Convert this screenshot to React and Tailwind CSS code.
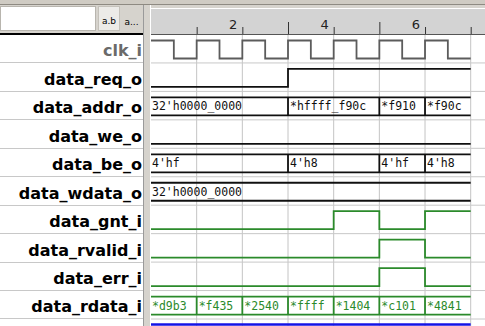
import React from "react";

const P = 45.67;
const H = 28.45;
const X = (k) => k * P;
const END = X(7);

const names = [
  "clk_i",
  "data_req_o",
  "data_addr_o",
  "data_we_o",
  "data_be_o",
  "data_wdata_o",
  "data_gnt_i",
  "data_rvalid_i",
  "data_err_i",
  "data_rdata_i",
];

const BLACK = "#101010";
const GREEN = "#2b8a2b";
const CLK = "#5c5c5c";

function Digital({ row, edges, color, start }) {
  // edges: list of [k, level]
  const top = row * H;
  const hi = top + 5.5;
  const lo = top + 23.5;
  let y = start ? hi : lo;
  let pts = [[0, y]];
  edges.forEach(([xx, lvl]) => {
    const ny = lvl ? hi : lo;
    pts.push([xx, y]);
    pts.push([xx, ny]);
    y = ny;
  });
  pts.push([END, y]);
  return (
    <polyline
      points={pts.map((p) => p.join(",")).join(" ")}
      fill="none"
      stroke={color}
      strokeWidth="1.8"
    />
  );
}

function Bus({ row, segs, color }) {
  const top = row * H;
  const a = top + 5.5;
  const b = top + 23.5;
  return (
    <g>
      <line x1={0} y1={a} x2={END} y2={a} stroke={color} strokeWidth="1.8" />
      <line x1={0} y1={b} x2={END} y2={b} stroke={color} strokeWidth="1.8" />
      {segs.map(([xx, label], i) => (
        <g key={i}>
          {xx > 0 && (
            <line x1={xx} y1={a} x2={xx} y2={b} stroke={color} strokeWidth="1.8" />
          )}
          <text
            x={xx + (xx > 0 ? 2 : 1)}
            y={top + 18.5}
            fill={color}
            fontFamily="'DejaVu Sans Mono', monospace"
            fontSize="11.5"
          >
            {label}
          </text>
        </g>
      ))}
    </g>
  );
}

function Waves() {
  const clkEdges = [];
  for (let k = 0; k < 7; k++) {
    clkEdges.push([X(k) + P / 2, 0]);
    clkEdges.push([X(k + 1), 1]);
  }
  clkEdges.pop();
  return (
    <svg width="334" height="291" className="block">
      {/* grid */}
      {[1, 2, 3, 4, 5, 6, 7].map((k) => (
        <line key={k} x1={X(k)} y1={0} x2={X(k)} y2={291} stroke="#c4c4c4" strokeWidth="1" />
      ))}
      {names.map((_, i) => (
        <line
          key={i}
          x1={0}
          y1={(i + 1) * H - 0.5}
          x2={334}
          y2={(i + 1) * H - 0.5}
          stroke="#c8c8c8"
          strokeWidth="1"
        />
      ))}
      <Digital row={0} edges={clkEdges} color={CLK} start={true} />
      <Digital row={1} edges={[[X(3), 1]]} color={BLACK} start={false} />
      <Bus
        row={2}
        color={BLACK}
        segs={[
          [0, "32'h0000_0000"],
          [X(3), "*hffff_f90c"],
          [X(5), "*f910"],
          [X(6), "*f90c"],
        ]}
      />
      <Digital row={3} edges={[]} color={BLACK} start={false} />
      <Bus
        row={4}
        color={BLACK}
        segs={[
          [0, "4'hf"],
          [X(3), "4'h8"],
          [X(5), "4'hf"],
          [X(6), "4'h8"],
        ]}
      />
      <Bus row={5} color={BLACK} segs={[[0, "32'h0000_0000"]]} />
      <Digital
        row={6}
        edges={[
          [X(4), 1],
          [X(5), 0],
          [X(6), 1],
        ]}
        color={GREEN}
        start={false}
      />
      <Digital
        row={7}
        edges={[
          [X(5), 1],
          [X(6), 0],
        ]}
        color={GREEN}
        start={false}
      />
      <Digital
        row={8}
        edges={[
          [X(5), 1],
          [X(6), 0],
        ]}
        color={GREEN}
        start={false}
      />
      <Bus
        row={9}
        color={GREEN}
        segs={[
          [0, "*d9b3"],
          [X(1), "*f435"],
          [X(2), "*2540"],
          [X(3), "*ffff"],
          [X(4), "*1404"],
          [X(5), "*c101"],
          [X(6), "*4841"],
        ]}
      />
      <line x1={0} y1={289.5} x2={END} y2={289.5} stroke="#1414e6" strokeWidth="2.5" />
    </svg>
  );
}

function Ruler() {
  const ticks = [1, 2, 3, 4, 5, 6, 7];
  return (
    <svg width="334" height="26" className="block">
      {ticks.map((k) => (
        <line
          key={k}
          x1={X(k) + 0.5}
          x2={X(k) + 0.5}
          y1={k === 3 || k === 5 ? 13 : 18}
          y2={26}
          stroke="#333"
          strokeWidth="1"
        />
      ))}
      {[
        [2, "2"],
        [4, "4"],
        [6, "6"],
      ].map(([k, t]) => (
        <text
          key={k}
          x={X(k) - 5}
          y={20}
          textAnchor="end"
          fontFamily="'DejaVu Sans', sans-serif"
          fontSize="13"
          fill="#222"
        >
          {t}
        </text>
      ))}
    </svg>
  );
}

export default function App() {
  return (
    <div className="w-[485px] h-[326px] overflow-hidden bg-[#d6d3cd] flex flex-col">
      <div className="h-[5px] shrink-0 bg-[#cfcbc3] border-b border-[#8e8a82]" />
      <div className="flex flex-1 min-h-0">
        {/* left panel */}
        <div className="w-[144px] shrink-0 flex flex-col border-r border-[#9a9a9a]">
          <div className="h-[28px] shrink-0 flex items-stretch pt-[1px] pb-[2px]">
            <div className="w-[96px] bg-white border border-[#b8b5ae]" />
            <div className="ml-[2px] w-[22px] bg-[#ecebe8] border border-[#c4c1ba] flex items-end justify-center pb-[4px] text-[9px] leading-none text-black font-['DejaVu_Sans',sans-serif]">
              a.b
            </div>
            <div className="flex-1 flex items-end justify-center pb-[4px] text-[9px] leading-none text-black font-['DejaVu_Sans',sans-serif]">
              a...
            </div>
          </div>
          <div className="h-[2px] shrink-0 bg-black" />
          <div className="flex-1 bg-white flex flex-col">
            {names.map((n, i) => (
              <div
                key={n}
                className={`h-[28.45px] shrink-0 border-b border-[#c8c8c8] flex items-end justify-end pr-[1px] pb-[3px] text-[16px] leading-[16px] font-bold font-['DejaVu_Sans',sans-serif] ${
                  i === 0 ? "text-[#6a6a6a]" : "text-black"
                }`}
              >
                {n}
              </div>
            ))}
          </div>
        </div>
        {/* splitter */}
        <div className="w-[6px] shrink-0 bg-[#d6d3cd]" />
        {/* right panel */}
        <div className="flex-1 flex flex-col border-l border-white">
          <div className="h-[3px] shrink-0" />
          <div className="h-[26px] shrink-0 bg-[#d3d3d3] border-t border-white">
            <Ruler />
          </div>
          <div className="h-[1px] shrink-0 bg-[#555]" />
          <div className="flex-1 bg-white">
            <Waves />
          </div>
        </div>
      </div>
    </div>
  );
}
